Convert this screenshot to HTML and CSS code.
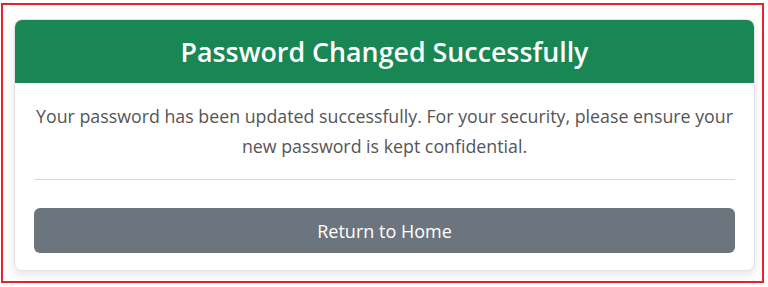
FILE: index.html
```html
<!DOCTYPE html>
<html lang="en">
<head>
  <meta charset="UTF-8">
  <meta name="viewport" content="width=device-width, initial-scale=1.0">
  <title>Password Changed</title>
  <link rel="stylesheet" href="styles.css">
</head>
<body>
  <div class="frame">
    <div class="card">
      <div class="card-header">
        <h3>Password Changed Successfully</h3>
      </div>
      <div class="card-body">
        <p class="message">Your password has been updated successfully. For your security, please ensure your new password is kept confidential.</p>
        <hr>
        <button type="button" class="btn" onclick="window.location.href='#'">Return to Home</button>
      </div>
    </div>
  </div>
</body>
</html>
```

FILE: styles.css
```css
    * {
      box-sizing: border-box;
    }
    body {
      margin: 0;
      font-family: "Open Sans", "Noto Sans", sans-serif;
      background: #fff;
    }
    .frame {
      margin: 3px 4px 4px 1px;
      height: 280px;
      border: 2px solid #e8222b;
      padding: 14px 7px 10px 11px;
    }
    .card {
      background: #fff;
      border: 1px solid #e3e3e3;
      border-radius: 8px;
      box-shadow: 0 4px 8px rgba(0, 0, 0, 0.1);
      overflow: hidden;
      height: 252px;
    }
    .card-header {
      background-color: #198754;
      height: 63px;
      display: flex;
      align-items: center;
      justify-content: center;
    }
    .card-header h3 {
      margin: 0;
      color: #fff;
      font-size: 26.8px;
      font-weight: 600;
    }
    .card-body {
      padding: 18px 19px 19px;
    }
    .message {
      margin: 0;
      color: #555;
      font-size: 17.8px;
      line-height: 30px;
      text-align: center;
    }
    hr {
      margin: 18px 0 28px;
      border: none;
      border-top: 1px solid #d9d9d9;
    }
    .btn {
      display: block;
      width: 100%;
      height: 45px;
      background-color: #6c757d;
      color: #fff;
      font-family: inherit;
      font-size: 18px;
      border: none;
      border-radius: 6px;
      cursor: pointer;
    }
    .btn:hover {
      background-color: #5c636a;
    }
```
